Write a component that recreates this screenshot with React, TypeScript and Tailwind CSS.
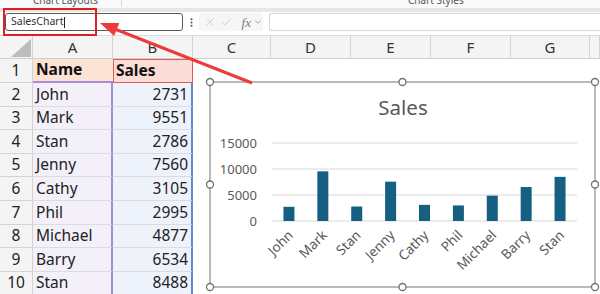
import { X, Check, ChevronDown, EllipsisVertical } from "lucide-react";

const rows = [
  { name: "John", sales: 2731 },
  { name: "Mark", sales: 9551 },
  { name: "Stan", sales: 2786 },
  { name: "Jenny", sales: 7560 },
  { name: "Cathy", sales: 3105 },
  { name: "Phil", sales: 2995 },
  { name: "Michael", sales: 4877 },
  { name: "Barry", sales: 6534 },
  { name: "Stan", sales: 8488 },
];

const otherCols = [
  { label: "C", cls: "w-[78px]" },
  { label: "D", cls: "w-[80px]" },
  { label: "E", cls: "w-[80px]" },
  { label: "F", cls: "w-[80px]" },
  { label: "G", cls: "w-[79px]" },
  { label: "", cls: "flex-1" },
];

// chart geometry, page coordinates
const plotLeft = 272;
const plotRight = 577;
const baseY = 221;
const maxY = 15000;
const plotH = 78;
const step = (plotRight - plotLeft) / rows.length;
const ticks = [15000, 10000, 5000, 0];
const yOf = (v: number) => baseY - (v / maxY) * plotH;

function Chart() {
  const handles = [
    [210, 82], [402.5, 82], [595, 82],
    [210, 184.5], [595, 184.5],
    [210, 287], [402.5, 287], [595, 287],
  ];
  return (
    <svg
      className="absolute left-[205px] top-[77px]"
      width={395}
      height={215}
      viewBox="205 77 395 215"
      style={{ fontFamily: "'Noto Sans', sans-serif" }}
    >
      <rect x={210} y={82} width={385} height={205} fill="#fff" stroke="#8c8c8c" strokeWidth={1.2} />
      <text x={403} y={115} textAnchor="middle" fontSize={20.5} fill="#595959">Sales</text>
      {ticks.map((t) => (
        <g key={t}>
          <line x1={plotLeft} x2={plotRight} y1={yOf(t)} y2={yOf(t)} stroke="#d9d9d9" strokeWidth={1} />
          <text x={257} y={yOf(t) + 4.5} textAnchor="end" fontSize={13} fill="#595959">{t}</text>
        </g>
      ))}
      {rows.map((r, i) => {
        const cx = plotLeft + step * (i + 0.5);
        const top = yOf(r.sales);
        return (
          <g key={i}>
            <rect x={cx - 5.5} y={top} width={11} height={baseY - top} fill="#156082" />
            <text
              x={cx + 5}
              y={236}
              textAnchor="end"
              fontSize={13.5}
              fill="#595959"
              transform={`rotate(-45 ${cx + 5} 236)`}
            >
              {r.name}
            </text>
          </g>
        );
      })}
      {handles.map(([x, y], i) => (
        <circle key={i} cx={x} cy={y} r={3.5} fill="#fff" stroke="#707070" strokeWidth={1.3} />
      ))}
    </svg>
  );
}

function Callout() {
  return (
    <svg className="absolute left-0 top-0 pointer-events-none" width={600} height={294}>
      <rect x={4} y={9} width={92} height={26} fill="none" stroke="#e21f1f" strokeWidth={2} />
      <line x1={252} y1={83} x2={116} y2={29.5} stroke="#ec3b3b" strokeWidth={3} />
      <polygon points="100,23 119.3,23.1 114.1,36.1" fill="#ec3b3b" />
    </svg>
  );
}

export default function App() {
  return (
    <div className="relative w-[600px] h-[294px] overflow-hidden bg-white font-['Noto_Sans',sans-serif] text-[#222]">
      {/* ribbon leftovers, clipped at the top like the screenshot */}
      <div className="h-[8px] bg-[#f9f9f9] flex overflow-hidden text-[10px] leading-[10px] text-[#555]">
        <span className="ml-[33px] -mt-[5px]">Chart Layouts</span>
        <span className="ml-[23px] w-px h-[7px] bg-[#d8d8d8]" />
        <span className="ml-[286px] -mt-[5px]">Chart Styles</span>
      </div>
      <div className="h-[4px] bg-[#e6e6e6]" />

      {/* formula bar */}
      <div className="h-[24px] flex items-start pt-[1px] border-b border-[#dcdcdc]">
        <div className="ml-[5px] w-[178px] h-[18px] border-[1.5px] border-[#5a5a5a] rounded-[3px] flex items-center pl-[5px] text-[10.5px] text-[#333]">
          SalesChart
          <span className="ml-px w-px h-[11px] bg-[#222]" />
        </div>
        <div className="w-[16px] h-[18px] flex items-center justify-center text-[#555]">
          <EllipsisVertical size={11} strokeWidth={2.5} />
        </div>
        <div className="w-[64px] h-[18px] rounded-[3px] bg-[#f6f6f6] flex items-center pl-[5px] text-[#c2c2c2]">
          <X size={12} strokeWidth={1.4} />
          <Check size={13} strokeWidth={1.4} className="ml-[4px]" />
          <span className="ml-[9px] font-['Liberation_Serif',serif] italic text-[13px] text-[#7a7a7a] leading-none">fx</span>
          <ChevronDown size={10} strokeWidth={1.8} className="ml-[2px] text-[#8a8a8a] shrink-0" />
        </div>
        <div className="ml-[6px] flex-1 h-[18px] border border-[#d6d6d6] rounded-l-[3px] border-r-0" />
      </div>

      {/* column headers */}
      <div className="h-[23px] flex bg-[#f4f4f4] border-b border-[#cfcfcf] text-[15px] text-[#333]">
        <div className="w-[33px] border-r border-[#d3d3d3] flex items-end justify-end pb-[1px] pr-px">
          <svg width="20" height="18"><polygon points="0,18 20,18 20,0" fill="#bdbdbd" /></svg>
        </div>
        <div className="w-[80px] border-r border-[#d3d3d3] flex items-center justify-center">A</div>
        <div className="w-[80px] border-r border-[#d3d3d3] flex items-center justify-center">B</div>
        {otherCols.map((c) => (
          <div key={c.label} className={`${c.cls} border-r border-[#d3d3d3] flex items-center justify-center`}>
            {c.label}
          </div>
        ))}
      </div>

      {/* header row 1 */}
      <div className="h-[24px] flex text-[15.5px]">
        <div className="w-[33px] bg-[#f4f4f4] border-r border-b border-[#d3d3d3] flex items-center justify-center">1</div>
        <div className="w-[80px] bg-[#fce3d6] border-b-2 border-[#a98bd8] flex items-center pl-[3px] font-bold text-[#111]">Name</div>
        <div className="w-[80px] bg-[#fbdcd6] border-[1.5px] border-[#e05a5a] flex items-center pl-[2px] font-bold text-[#111]">Sales</div>
        <div className="flex-1" />
      </div>

      {/* data rows */}
      {rows.map((r, i) => (
        <div key={i} className="h-[23.6px] flex text-[15.5px]">
          <div className="w-[33px] bg-[#f4f4f4] border-r border-b border-[#d3d3d3] flex items-center justify-center">
            {i + 2}
          </div>
          <div className="w-[80px] bg-[#f3f0f9] border-r-2 border-r-[#a98bd8] border-b border-b-[#dcdcdc] flex items-center pl-[3px]">
            {r.name}
          </div>
          <div className="w-[80px] bg-[#eef3fb] border-r-2 border-r-[#5b8ad6] border-b border-b-[#dcdcdc] flex items-center justify-end pr-[3px]">
            {r.sales}
          </div>
          <div className="flex-1" />
        </div>
      ))}

      <Chart />
      <Callout />
    </div>
  );
}
